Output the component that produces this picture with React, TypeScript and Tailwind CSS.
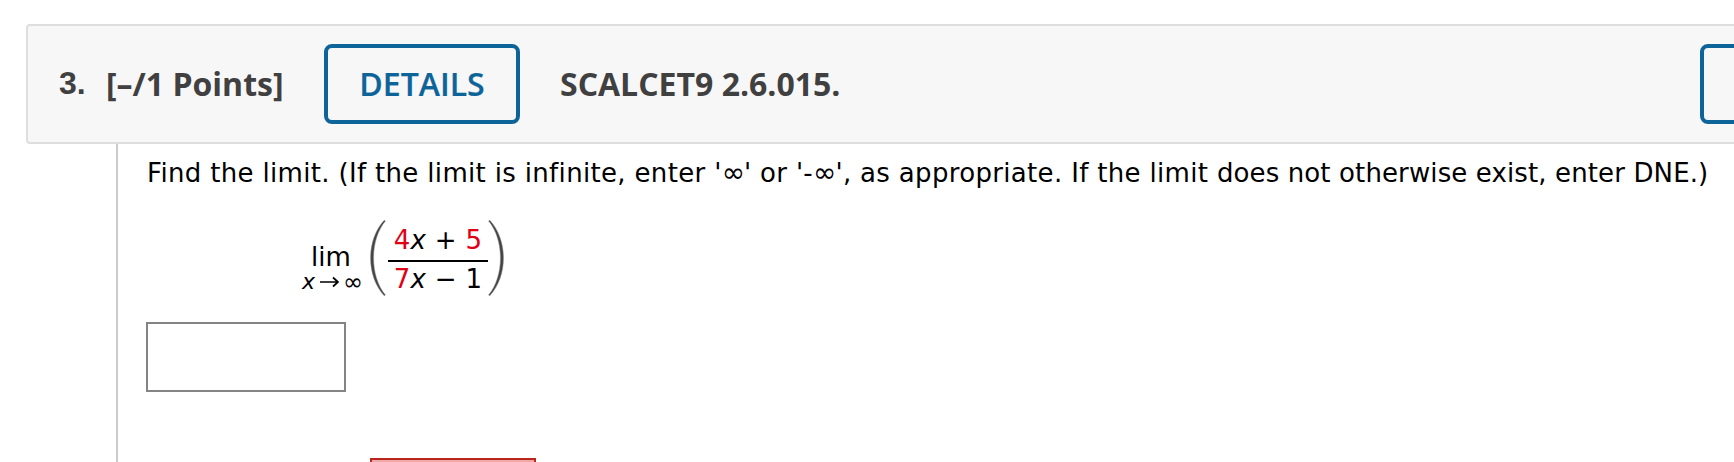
import React from 'react';

const OutlineButton: React.FC<{ className: string; children?: React.ReactNode }> = ({ className, children }) => (
    <button
        className={`h-20 shrink-0 rounded-lg border-4 border-[#0c6499] text-[32px] leading-[72px] font-semibold text-[#0c6499] [-webkit-text-stroke:0.2px_#0c6499] ${className}`}
    >
        {children}
    </button>
);

const QuestionHeader: React.FC = () => (
    <header className="flex h-[120px] w-[1900px] items-center rounded-[4px] border-2 border-[#dedede] bg-[#f7f7f7] font-['Open_Sans',sans-serif] text-[32px] font-bold text-[#404040]">
        <span className="ml-[31px] w-[47px] pb-0.5 font-['Liberation_Sans',sans-serif] text-[32px]">3.</span>
        <span className="w-[218px]">[–/1 Points]</span>
        <OutlineButton className="w-[196px]">DETAILS</OutlineButton>
        <span className="ml-10 w-[1140px]">SCALCET9 2.6.015.</span>
        <OutlineButton className="w-[196px]" />
    </header>
);

const Paren: React.FC<{ flip?: boolean }> = ({ flip }) => (
    <svg viewBox="0 0 16 76" className={`h-[76px] w-4 shrink-0 ${flip ? '-scale-x-100' : ''}`}>
        <path d="M14.2 0.3C-4 20 -4 56 14.2 75.7L15.4 75C-0.4 56 -0.4 20 15.4 1Z" fill="#444" stroke="#888" strokeWidth="0.5" />
    </svg>
);

const Infinity: React.FC = () => <span className="text-[28px] leading-none tracking-[-1px]">∞</span>;

const LimitExpression: React.FC = () => (
    <div className="mt-[30px] ml-[156px] flex h-[76px] text-[26px] leading-[30px]">
        <div className="w-[68px] pt-[22px]">
            <div className="pl-[9px] leading-[30px]">lim</div>
            <div className="flex h-[20px] items-center text-[22px] leading-[20px]">
                <i className="w-[18px]">x</i>
                <svg viewBox="0 0 20 12" className="h-3 w-5">
                    <path d="M0 6H18M13 1.5L18 6L13 10.5" fill="none" stroke="black" strokeWidth="1.7" />
                </svg>
                <span className="ml-[3px] text-[24px]">∞</span>
            </div>
        </div>
        <Paren />
        <div className="ml-0.5 w-[100px] text-center tracking-[0.3px] whitespace-nowrap">
            <div className="h-10 pt-[5px]"><span className="text-[#e00016]">4</span><i>x</i> + <span className="text-[#e00016]">5</span></div>
            <div className="h-0.5 bg-black" />
            <div className="pt-0.5"><span className="text-[#e00016]">7</span><i>x</i> − 1</div>
        </div>
        <Paren flip />
    </div>
);

const App: React.FC = () => (
    <main className="h-[462px] w-full overflow-hidden bg-white pt-6 pl-[26px] font-['DejaVu_Sans',sans-serif] text-black">
        <QuestionHeader />
        <section className="ml-[90px] h-[318px] border-l-2 border-[#cbcbcb] pl-7">
            <p className="h-[46px] pt-3 pl-px text-[26px] leading-[34px] tracking-[0.33px] whitespace-nowrap">
                Find the limit. (If the limit is infinite, enter '<Infinity />' or '-<Infinity />', as appropriate. If the limit{' '}
                <span className="tracking-[0.12px]">does not otherwise exist, enter DNE.)</span>
            </p>
            <LimitExpression />
            <input className="mt-[26px] block h-[70px] w-[200px] border-2 border-[#848484] bg-white outline-none" />
            <div className="mt-[66px] ml-[224px] h-10 w-[166px] border-2 border-[#b9261d] bg-[#f0a8a4]" />
        </section>
    </main>
);

export default App;
